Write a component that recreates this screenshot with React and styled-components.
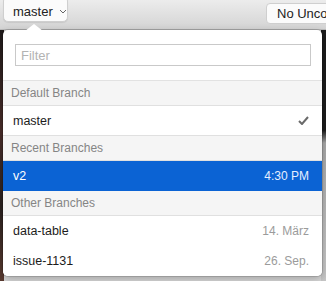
import React from "react";
import styled, { createGlobalStyle } from "styled-components";

const Global = createGlobalStyle`
  html, body { margin: 0; padding: 0; }
  body { font-family: "Helvetica Neue", "Liberation Sans", Arial, sans-serif; -webkit-font-smoothing: antialiased; }
`;

const Page = styled.div`
  position: relative;
  width: 326px;
  height: 281px;
  overflow: hidden;
  display: flex;
  flex-direction: column;
  background: #d8d8d8;
`;

const Toolbar = styled.div`
  height: 30px;
  flex: none;
  display: flex;
  justify-content: space-between;
  align-items: flex-start;
  padding-left: 3px;
  background: linear-gradient(#ececec, #d4d4d4);
  border-bottom: 1px solid #b9b9b9;
  box-sizing: border-box;
`;

const BranchButton = styled.div`
  margin-top: -4px;
  height: 26px;
  width: 65px;
  box-sizing: border-box;
  display: flex;
  align-items: center;
  padding: 4px 0 0 9px;
  gap: 6px;
  background: #fbfbfb;
  border: 1px solid #cfcfcf;
  border-radius: 5px;
  box-shadow: 0 1px 1px rgba(0,0,0,0.08);
  font-size: 13px;
  color: #222;
`;

const ToolButton = styled.div`
  margin-top: 3px;
  height: 21px;
  width: 70px;
  margin-right: -10px;
  box-sizing: border-box;
  display: flex;
  align-items: center;
  padding-left: 10px;
  background: #fbfbfb;
  border: 1px solid #cfcfcf;
  border-radius: 4px;
  font-size: 13px;
  color: #222;
  white-space: nowrap;
  overflow: hidden;
`;

const Backdrop = styled.div`
  flex: 1;
  display: flex;
  justify-content: space-between;
`;

const Strip = styled.div`
  width: ${p => p.$w}px;
  background: ${p => p.$bg};
`;

const Popover = styled.div`
  position: absolute;
  left: 3px;
  top: 30px;
  width: 319px;
  height: 246px;
  background: #fff;
  border-radius: 5px;
  box-shadow: 0 0 0 1px rgba(0,0,0,0.12), 0 3px 8px rgba(0,0,0,0.25);
  display: flex;
  flex-direction: column;
  overflow: hidden;
`;

const Arrow = styled.div`
  position: absolute;
  left: 25px;
  top: 24px;
  width: 0;
  height: 0;
  border-left: 9px solid transparent;
  border-right: 9px solid transparent;
  border-bottom: 7px solid #fff;
  z-index: 2;
`;

const FilterArea = styled.div`
  padding: 14px 11px 14px 12px;
  border-bottom: 1px solid #e2e2e2;
`;

const FilterInput = styled.div`
  height: 22px;
  box-sizing: border-box;
  border: 1px solid #c9c9c9;
  display: flex;
  align-items: center;
  padding-left: 5px;
  font-size: 13px;
  color: #b3b3b3;
`;

const Header = styled.div`
  height: 25px;
  flex: none;
  box-sizing: border-box;
  background: #f5f5f5;
  border-bottom: 1px solid #e0e0e0;
  display: flex;
  align-items: center;
  padding-left: 8px;
  font-size: 12px;
  color: #858585;
`;

const Row = styled.div`
  height: 30px;
  flex: none;
  box-sizing: border-box;
  display: flex;
  align-items: center;
  justify-content: space-between;
  padding: 0 13px 0 10px;
  font-size: 12.5px;
  color: ${p => (p.$selected ? "#fff" : "#1c1c1c")};
  background: ${p => (p.$selected ? "#0b63d4" : "#fff")};
  border-bottom: ${p => (p.$divider ? "1px solid #e0e0e0" : "none")};
`;

const Meta = styled.span`
  font-size: 12px;
  color: ${p => (p.$selected ? "#e6efff" : "#9b9b9b")};
`;

const Chevron = () => (
  <svg width="8" height="5" viewBox="0 0 8 5">
    <path d="M1 1 L4 4 L7 1" fill="none" stroke="#666" strokeWidth="1" />
  </svg>
);

const Check = () => (
  <svg width="11" height="9" viewBox="0 0 11 9">
    <path d="M1 5 L4 8 L10 1" fill="none" stroke="#6a6a6a" strokeWidth="2" />
  </svg>
);

export default function App() {
  return (
    <>
      <Global />
      <Page>
        <Toolbar>
          <BranchButton>
            master <Chevron />
          </BranchButton>
          <ToolButton>No Uncommitted</ToolButton>
        </Toolbar>
        <Backdrop>
          <Strip $w={4} $bg="linear-gradient(#1e1a1a, #4a2e2a 40%, #2a2220 70%, #5a3a30)" />
          <Strip $w={5} $bg="linear-gradient(#1c1c1c, #1c1c1c 40%, #a8a8a8 45%, #c8c8c8)" />
        </Backdrop>
        <Arrow />
        <Popover>
          <FilterArea>
            <FilterInput>Filter</FilterInput>
          </FilterArea>
          <Header>Default Branch</Header>
          <Row $divider>
            <span>master</span>
            <Check />
          </Row>
          <Header>Recent Branches</Header>
          <Row $selected>
            <span>v2</span>
            <Meta $selected>4:30 PM</Meta>
          </Row>
          <Header>Other Branches</Header>
          <Row>
            <span>data-table</span>
            <Meta>14. März</Meta>
          </Row>
          <Row>
            <span>issue-1131</span>
            <Meta>26. Sep.</Meta>
          </Row>
        </Popover>
      </Page>
    </>
  );
}
